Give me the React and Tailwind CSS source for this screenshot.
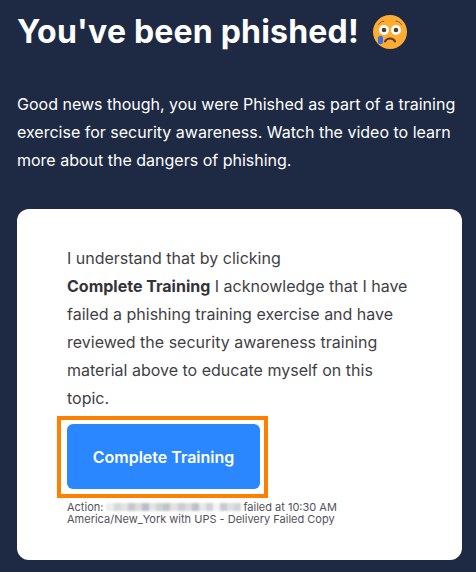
const redactedBits = ['#eceef0', '#d5d8dc', '#e6e2e0', '#c4c8cd', '#dcdcd8', '#b9bec6', '#e2e4e8', '#cfd2d0', '#bfc3ca', '#e4e1dc', '#c9cdd4', '#d9dcdf', '#bcc1c8', '#e8e8e6', '#ced2d8', '#f2f3f4', '#c6cad0', '#dcdfe2', '#d0d3d8']

function FaceEmoji() {
  return (
    <svg width="34" height="34" viewBox="0 0 34 34" className="shrink-0">
      <circle cx="17" cy="17" r="17" fill="#ffac33" />
      <path d="M5.500 9.500c1.300-2.200 3.200-3.200 5.500-3.300" stroke="#8a5a1c" strokeWidth="1" fill="none" strokeLinecap="round" />
      <path d="M28.500 9.500c-1.300-2.200-3.200-3.200-5.500-3.300" stroke="#8a5a1c" strokeWidth="1" fill="none" strokeLinecap="round" />
      <circle cx="11" cy="15" r="5" fill="#fff" />
      <circle cx="23" cy="15" r="5" fill="#fff" />
      <circle cx="11" cy="15" r="2.300" fill="#533c2c" />
      <circle cx="23" cy="15" r="2.300" fill="#533c2c" />
      <path d="M12 26.500c1-2.200 2.800-3 5-3s4 .8 5 3" stroke="#533c2c" strokeWidth="2" fill="none" strokeLinecap="round" />
      <path d="M5 23c0-1.200.9-2.200 2.500-2.200S10 21.800 10 23v4c0 1.300-1 2.300-2.500 2.300S5 28.300 5 27z" fill="#3b6fe0" />
    </svg>
  )
}

export default function App() {
  return (
    <div className="w-[476px] h-[572px] overflow-hidden bg-[#1e2a44] font-['Inter',sans-serif]">
      <div className="px-[17px] pt-[10px]">
        <div className="flex items-center gap-[14px]">
          <h1 className="text-[32px] leading-[44px] font-bold text-white tracking-[0.2px] whitespace-nowrap">
            You've been phished!
          </h1>
          <FaceEmoji />
        </div>
        <p className="mt-[36px] text-[16px] leading-[28px] text-white">
          Good news though, you were Phished as part of a training exercise for security awareness. Watch the video to learn more about the dangers of phishing.
        </p>

        <div className="mt-[35px] w-[445px] h-[351px] rounded-xl bg-white pl-[50px] pr-[50px] pt-[35px]">
          <p className="text-[16px] leading-[28px] text-[#3f3f46]">
            I understand that by clicking
            <br />
            <strong className="font-bold text-[#333338]">Complete Training</strong> I acknowledge that I have failed a phishing training exercise and have reviewed the security awareness training material above to educate myself on this topic.
          </p>
          <div className="-ml-[10px] mt-[4px] w-[211px] h-[82px] border-4 border-[#ff8000] pl-[6px] pt-[4px]">
            <button
              type="button"
              className="w-[193px] h-[65px] rounded-md bg-[#2b87ff] text-[16px] font-semibold text-white"
            >
              Complete Training
            </button>
          </div>
          <div className="mt-[3px] text-[11px] leading-[12px] text-[#52525b] whitespace-nowrap">
            <div className="flex items-center">
              <span>Action:</span>
              <span className="flex w-[135px] h-[8px] ml-[3px] mr-[2px] blur-[1px]">
                {redactedBits.map((color, i) => (
                  <span key={i} className="flex-1" style={{ backgroundColor: color }} />
                ))}
              </span>
              <span>failed at 10:30 AM</span>
            </div>
            <div>America/New_York with UPS - Delivery Failed Copy</div>
          </div>
        </div>
      </div>
    </div>
  )
}
